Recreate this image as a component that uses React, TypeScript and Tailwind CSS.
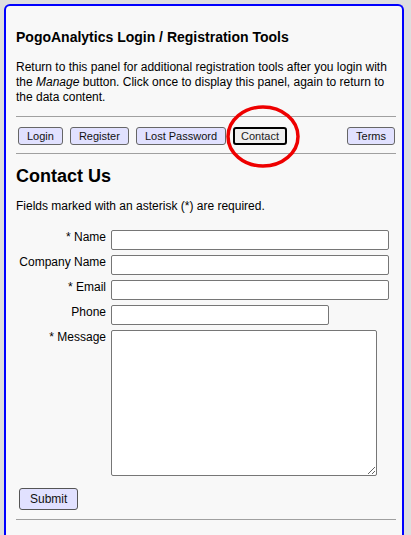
import React from 'react'

const topButtons = [
  { label: 'Login', active: false },
  { label: 'Register', active: false },
  { label: 'Lost Password', active: false },
  { label: 'Contact', active: true },
]

const fields = [
  { label: '* Name', width: 'w-[278px]' },
  { label: 'Company Name', width: 'w-[278px]' },
  { label: '* Email', width: 'w-[278px]' },
  { label: 'Phone', width: 'w-[218px]' },
]

function Rule({ className = '' }: { className?: string }) {
  return <div className={`h-px bg-[#a0a0a0] ${className}`} />
}

export default function App() {
  return (
    <div className="relative min-h-screen bg-[#dedede] pl-[4px] pt-[4px] font-['Liberation_Sans',Arial,sans-serif] text-black">
      <div className="w-[400px] rounded-t-[6px] border-2 border-b-0 border-[#0000ff] bg-[#f8f8f8] pl-[10px] pr-[6px] pt-[23px] pb-[40px]">
        {/* Header */}
        <h1 className="text-[14px] font-bold leading-[17px]">PogoAnalytics Login / Registration Tools</h1>
        <p className="mt-[14px] pr-[4px] text-[12px] leading-[15px]">
          Return to this panel for additional registration tools after you login with the <i>Manage</i> button.
          Click once to display this panel, again to return to the data content.
        </p>

        <Rule className="mt-[11px]" />

        {/* Tool buttons */}
        <div className="mt-[10px] flex items-center gap-[7px] pl-[2px] pr-px">
          {topButtons.map((b) =>
            b.active ? (
              <button
                key={b.label}
                className="h-[18px] rounded-[3px] border-2 border-black bg-[#efefef] px-[6px] text-[11px] leading-none text-[#222]"
              >
                {b.label}
              </button>
            ) : (
              <button
                key={b.label}
                className="h-[18px] rounded-[3px] border border-[#666] bg-[#e1e1ff] px-[8px] text-[11px] leading-none text-[#111]"
              >
                {b.label}
              </button>
            )
          )}
          <button className="ml-auto h-[18px] rounded-[3px] border border-[#666] bg-[#e1e1ff] px-[8px] text-[11px] leading-none text-[#111]">
            Terms
          </button>
        </div>

        <Rule className="mt-[8px]" />

        {/* Contact form */}
        <h2 className="mt-[12px] text-[18px] font-bold leading-[21px]">Contact Us</h2>
        <p className="mt-[12px] text-[12px] leading-[15px]">Fields marked with an asterisk (*) are required.</p>

        <div className="mt-[16px] grid grid-cols-[90px_1fr] gap-x-[5px] gap-y-[5px] text-[12px] leading-[15px]">
          {fields.map((f) => (
            <React.Fragment key={f.label}>
              <label className="text-right">{f.label}</label>
              <input
                type="text"
                className={`h-[20px] ${f.width} rounded-[2px] border border-[#767676] bg-white`}
              />
            </React.Fragment>
          ))}
          <label className="text-right">* Message</label>
          <textarea className="h-[146px] w-[266px] rounded-[2px] border border-[#767676] bg-white" />
        </div>

        <button className="ml-[3px] mt-[12px] h-[22px] rounded-[3px] border border-[#555] bg-[#e1e1ff] px-[10px] text-[12px] leading-none text-[#111]">
          Submit
        </button>

        <Rule className="mt-[9px]" />
      </div>

      {/* Red highlight circle around the Contact button */}
      <svg className="absolute left-[226px] top-[105px]" width="74" height="63" viewBox="0 0 74 63">
        <ellipse cx="37" cy="31.5" rx="35" ry="29.5" fill="none" stroke="#ee0000" strokeWidth="3.5" />
      </svg>
    </div>
  )
}
